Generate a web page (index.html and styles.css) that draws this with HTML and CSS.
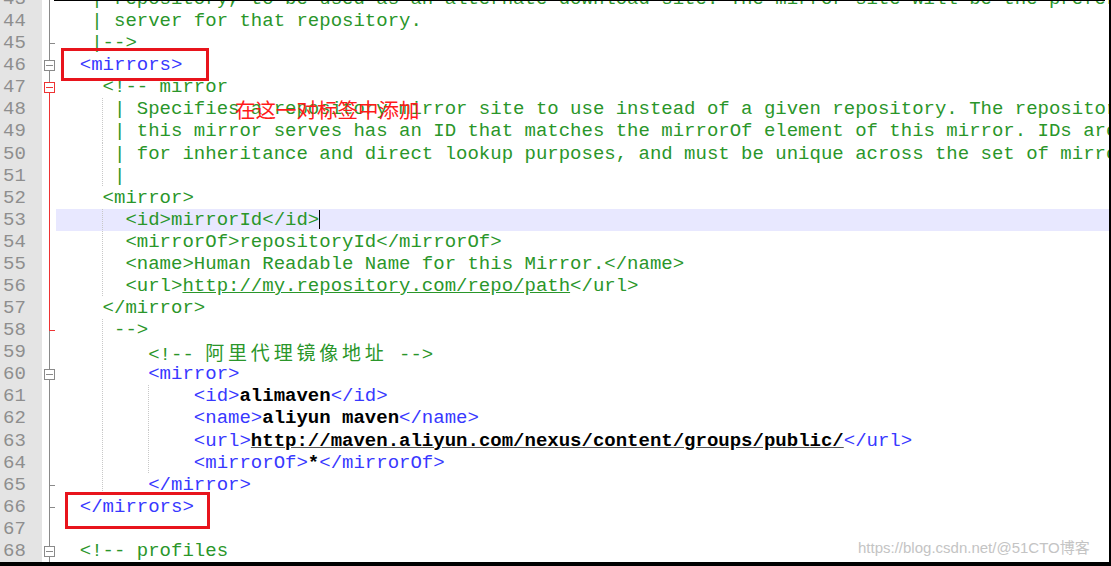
FILE: index.html
```html
<!DOCTYPE html>
<html>
<head>
<meta charset="utf-8">
<link rel="stylesheet" href="styles.css">
</head>
<body>
<div class="frame">
  <div class="rows">
    <div class="row"><span class="num">43</span><span class="fold"><i class="vl"></i></span><span class="code c">   | repository, to be used as an alternate download site. The mirror site will be the preferred</span></div>
    <div class="row"><span class="num">44</span><span class="fold"><i class="vl"></i></span><span class="code c">   | server for that repository.</span></div>
    <div class="row"><span class="num">45</span><span class="fold"><i class="vl"></i><i class="tk"></i></span><span class="code c">   |--&gt;</span></div>
    <div class="row"><span class="num">46</span><span class="fold"><i class="vl"></i><i class="bx"></i></span><span class="code t">  &lt;mirrors&gt;</span></div>
    <div class="row"><span class="num">47</span><span class="fold"><i class="vl"></i><i class="vbr"></i><i class="bxr"></i></span><span class="code c">    &lt;!-- mirror</span></div>
    <div class="row"><span class="num">48</span><span class="fold"><i class="vlr"></i></span><span class="code c g4">     | Specifies a repository mirror site to use instead of a given repository. The repository that</span></div>
    <div class="row"><span class="num">49</span><span class="fold"><i class="vlr"></i></span><span class="code c g4">     | this mirror serves has an ID that matches the mirrorOf element of this mirror. IDs are used</span></div>
    <div class="row"><span class="num">50</span><span class="fold"><i class="vlr"></i></span><span class="code c g4">     | for inheritance and direct lookup purposes, and must be unique across the set of mirrors.</span></div>
    <div class="row"><span class="num">51</span><span class="fold"><i class="vlr"></i></span><span class="code c g4">     |</span></div>
    <div class="row"><span class="num">52</span><span class="fold"><i class="vlr"></i></span><span class="code c">    &lt;mirror&gt;</span></div>
    <div class="row"><span class="num">53</span><span class="fold"><i class="vlr"></i></span><span class="code c g4 cur">      &lt;id&gt;mirrorId&lt;/id&gt;<span class="caret"></span></span></div>
    <div class="row"><span class="num">54</span><span class="fold"><i class="vlr"></i></span><span class="code c g4">      &lt;mirrorOf&gt;repositoryId&lt;/mirrorOf&gt;</span></div>
    <div class="row"><span class="num">55</span><span class="fold"><i class="vlr"></i></span><span class="code c g4">      &lt;name&gt;Human Readable Name for this Mirror.&lt;/name&gt;</span></div>
    <div class="row"><span class="num">56</span><span class="fold"><i class="vlr"></i></span><span class="code c g4">      &lt;url&gt;<span class="u">http://my.repository.com/repo/path</span>&lt;/url&gt;</span></div>
    <div class="row"><span class="num">57</span><span class="fold"><i class="vlr"></i></span><span class="code c">    &lt;/mirror&gt;</span></div>
    <div class="row"><span class="num">58</span><span class="fold"><i class="vl"></i><i class="vtr"></i><i class="tkr"></i></span><span class="code c g4">     --&gt;</span></div>
    <div class="row"><span class="num">59</span><span class="fold"><i class="vl"></i></span><span class="code c g4">        &lt;!-- <span class="cjk">阿里代理镜像地址</span> --&gt;</span></div>
    <div class="row"><span class="num">60</span><span class="fold"><i class="vl"></i><i class="bx"></i></span><span class="code t g4">        &lt;mirror&gt;</span></div>
    <div class="row"><span class="num">61</span><span class="fold"><i class="vl"></i></span><span class="code t g8">            &lt;id&gt;<b>alimaven</b>&lt;/id&gt;</span></div>
    <div class="row"><span class="num">62</span><span class="fold"><i class="vl"></i></span><span class="code t g8">            &lt;name&gt;<b>aliyun maven</b>&lt;/name&gt;</span></div>
    <div class="row"><span class="num">63</span><span class="fold"><i class="vl"></i></span><span class="code t g8">            &lt;url&gt;<b class="ub">http://maven.aliyun.com/nexus/content/groups/public/</b>&lt;/url&gt;</span></div>
    <div class="row"><span class="num">64</span><span class="fold"><i class="vl"></i></span><span class="code t g8">            &lt;mirrorOf&gt;<b>*</b>&lt;/mirrorOf&gt;</span></div>
    <div class="row"><span class="num">65</span><span class="fold"><i class="vl"></i><i class="tk"></i></span><span class="code t g4">        &lt;/mirror&gt;</span></div>
    <div class="row"><span class="num">66</span><span class="fold"><i class="vl"></i><i class="tk"></i></span><span class="code t">  &lt;/mirrors&gt;</span></div>
    <div class="row"><span class="num">67</span><span class="fold"><i class="vl"></i></span><span class="code"></span></div>
    <div class="row"><span class="num">68</span><span class="fold"><i class="vl"></i><i class="bx"></i></span><span class="code c">  &lt;!-- profiles</span></div>
  </div>

  <div class="topline"></div>
  <div class="mark mark1"></div>
  <div class="mark mark2"></div>
  <div class="note">在这一对标签中添加</div>
  <div class="wm">https://blog.csdn.net/@51CTO博客</div>
</div>
</body>
</html>
```

FILE: styles.css
```css
html, body {
  margin: 0;
  padding: 0;
  background: #fff;
}

.frame {
  position: relative;
  width: 1111px;
  height: 566px;
  box-sizing: border-box;
  border-right: 2px solid #000;
  border-bottom: 4px solid #000;
  overflow: hidden;
  background: #fff;
}

.rows {
  display: flex;
  flex-direction: column;
  margin-top: -12px;
}

.row {
  display: flex;
  flex: 0 0 22.08px;
  height: 22.08px;
  font-family: "Liberation Mono", "Courier New", monospace;
  font-size: 19px;
  line-height: 22px;
}

.num {
  flex: 0 0 42px;
  box-sizing: border-box;
  padding-left: 3px;
  background: #e4e4e4;
  color: #8e8e8e;
  white-space: pre;
}

.fold {
  position: relative;
  flex: 0 0 14px;
  background: #fff;
}

.fold i {
  position: absolute;
  display: block;
}

.vl { left: 7px; top: 0; bottom: 0; width: 1px; background: #8a8a8a; }
.vlr { left: 7px; top: 0; bottom: 0; width: 1px; background: #e33; }
.vbr { left: 7px; top: 11px; bottom: 0; width: 1px; background: #e33; }
.vtr { left: 7px; top: 0; height: 12px; width: 1px; background: #e33; }
.tk { left: 7px; top: 11px; width: 6px; height: 1px; background: #8a8a8a; }
.tkr { left: 7px; top: 11px; width: 6px; height: 1px; background: #e33; }

.bx, .bxr {
  left: 2px;
  top: 6px;
  width: 9px;
  height: 9px;
  border: 1px solid #8a8a8a;
  background: linear-gradient(#8a8a8a, #8a8a8a) center / 7px 1px no-repeat, #fff;
}
.bxr {
  border-color: #e33;
  background: linear-gradient(#e33, #e33) center / 7px 1px no-repeat, #fff;
}

.code {
  flex: 1 1 auto;
  min-width: 0;
  padding-left: 1px;
  white-space: pre;
  overflow: hidden;
}

.c { color: #2a962a; }
.t { color: #3838ff; }
.code b { color: #000; font-weight: bold; }
.u { text-decoration: underline; }
.ub { text-decoration: underline; text-decoration-color: #555; }

.cjk {
  font-family: "Noto Sans CJK SC", sans-serif;
  font-size: 19px;
  letter-spacing: 3.8px;
}

.g4 {
  background-image: repeating-linear-gradient(to bottom, #c8c8c8 0 1px, transparent 1px 2px);
  background-size: 1px 100%;
  background-position: 46px 0;
  background-repeat: no-repeat;
}

.g8 {
  background-image:
    repeating-linear-gradient(to bottom, #c8c8c8 0 1px, transparent 1px 2px),
    repeating-linear-gradient(to bottom, #c8c8c8 0 1px, transparent 1px 2px);
  background-size: 1px 100%, 1px 100%;
  background-position: 46px 0, 92px 0;
  background-repeat: no-repeat;
}

.cur {
  background-color: #e8e8ff;
}

.caret {
  display: inline-block;
  width: 1px;
  height: 19px;
  margin-right: -1px;
  vertical-align: -4px;
  background: #000;
}

.topline {
  position: absolute;
  left: 54px;
  right: 4px;
  top: 0;
  height: 1px;
  background: #000;
}

.mark {
  position: absolute;
  box-sizing: border-box;
  border: 3px solid #e8141c;
}
.mark1 { left: 61px; top: 48px; width: 148px; height: 33px; }
.mark2 { left: 65px; top: 492px; width: 145px; height: 37px; }

.note {
  position: absolute;
  left: 235px;
  top: 97px;
  font-family: "Noto Sans CJK SC", sans-serif;
  font-size: 20.5px;
  line-height: 24px;
  color: #ff1a1a;
  white-space: nowrap;
}

.wm {
  position: absolute;
  left: 858px;
  top: 538px;
  font-family: "Liberation Sans", Arial, "Noto Sans CJK SC", sans-serif;
  font-size: 15px;
  line-height: 20px;
  color: #c4c4c4;
  white-space: nowrap;
}
```
